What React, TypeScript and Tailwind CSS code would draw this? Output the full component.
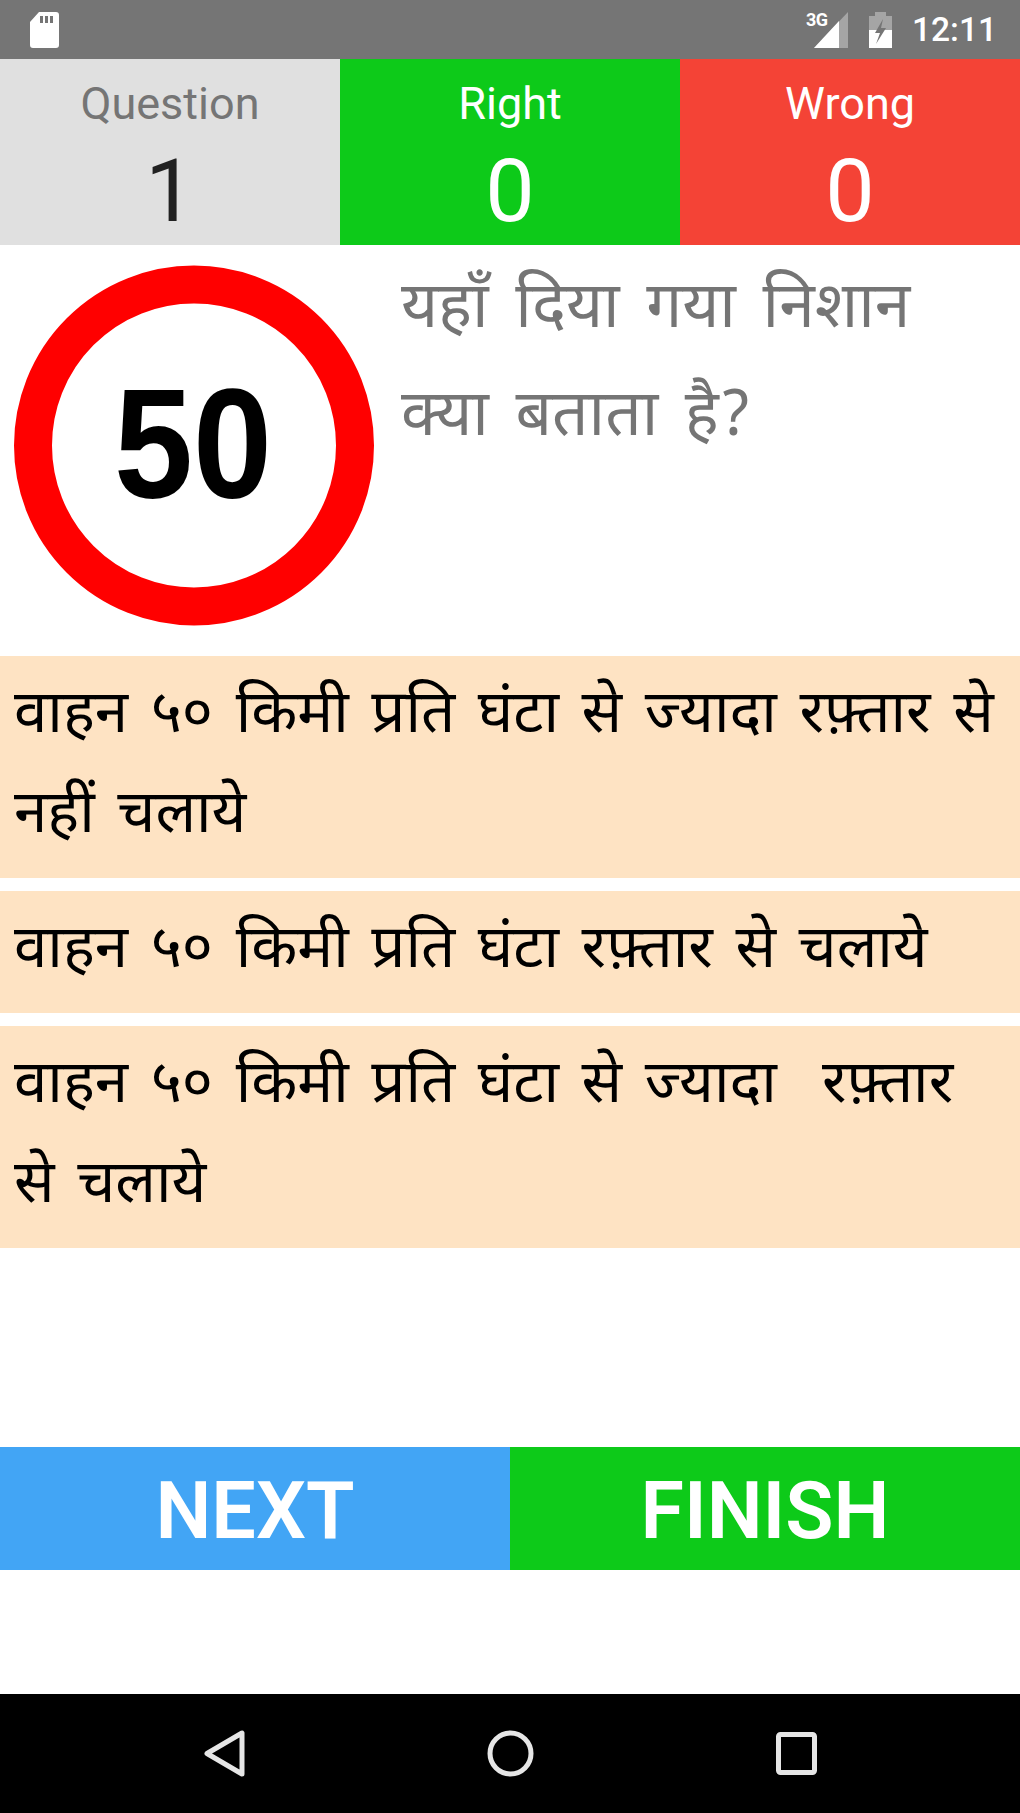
const deva = "font-['Noto_Sans_Devanagari','Lohit_Devanagari','Noto_Sans','DejaVu_Sans',sans-serif]";

function StatCell({ label, value, className, labelClass }: { label: string; value: string; className: string; labelClass: string }) {
  return (
    <div className={`flex flex-1 flex-col items-center ${className}`}>
      <div className={`mt-[20px] text-[45px] leading-[50px] ${labelClass}`}>{label}</div>
      <div className="mt-[12px] text-[88px] leading-[100px]">{value}</div>
    </div>
  );
}

function Option({ text }: { text: string }) {
  return (
    <div className={`whitespace-pre-wrap bg-[#fee3c3] py-[11px] pl-[14px] pr-[14px] text-[60px] leading-[100px] text-black [word-spacing:7px] ${deva}`}>
      {text}
    </div>
  );
}

export default function App() {
  return (
    <div className="flex h-[1813px] w-[1020px] flex-col overflow-hidden bg-white font-['Roboto',sans-serif]">
      {/* status bar */}
      <div className="flex h-[59px] items-center justify-between bg-[#757575] pl-[30px] pr-[23px]">
        <svg width="29" height="36" viewBox="0 0 29 36" className="mb-[-1px]">
          <path d="M9 0H26a3 3 0 0 1 3 3V33a3 3 0 0 1-3 3H3a3 3 0 0 1-3-3V10Z M10 4V11H13V4Z M15 4V11H18V4Z M20 4V11H23V4Z" fill="#fff" fillRule="evenodd" />
        </svg>
        <div className="flex items-center">
          <div className="relative h-[36px] w-[42px]">
            <span className="absolute left-0 top-[-1px] text-[18px] font-bold leading-[18px] tracking-[-0.5px] text-white">3G</span>
            <svg width="34" height="36" viewBox="0 0 34 36" className="absolute left-[8px] top-0">
              <path d="M34 0V36H0Z" fill="#fff" fillOpacity="0.35" />
              <path d="M25 9V36H0Z" fill="#fff" />
            </svg>
          </div>
          <svg width="24" height="36" viewBox="0 0 24 36" className="ml-[21px]">
            <path d="M6 0H17V4H23V36H0V4H6Z" fill="#fff" fillOpacity="0.35" />
            <path d="M0 18H23V36H0Z" fill="#fff" />
            <path d="M14 7L6 21H11L7 32L17 16H12Z" fill="#757575" />
          </svg>
          <span className="ml-[19px] text-[33.500px] font-medium leading-none text-white">12:11</span>
        </div>
      </div>

      {/* score row */}
      <div className="flex h-[186px] w-full">
        <StatCell label="Question" value="1" className="bg-[#e0e0e0] text-[#212121]" labelClass="text-[#757575]" />
        <StatCell label="Right" value="0" className="bg-[#0dca19] text-white" labelClass="" />
        <StatCell label="Wrong" value="0" className="bg-[#f44336] text-white" labelClass="" />
      </div>

      {/* question */}
      <div className="flex h-[411px] pl-[14px] pt-[20px]">
        <svg width="361" height="361" viewBox="0 0 361 361" className="shrink-0">
          <circle cx="180" cy="180.500" r="161" fill="#fff" stroke="#ff0000" strokeWidth="38" />
          <text x="179" y="232" textAnchor="middle" fontFamily="Liberation Sans" fontWeight="700" fontSize="156" textLength="158" lengthAdjust="spacingAndGlyphs" fill="#000">50</text>
        </svg>
        <div className={`-mt-[7px] ml-[26px] text-[64px] leading-[108px] text-[#757575] [word-spacing:10px] ${deva}`}>
          यहाँ दिया गया निशान
          <br />
          क्या बताता है?
        </div>
      </div>

      {/* answers */}
      <div className="flex flex-col gap-[13px]">
        <Option text="वाहन ५० किमी प्रति घंटा से ज्यादा रफ़्तार से नहीं चलाये" />
        <Option text="वाहन ५० किमी प्रति घंटा रफ़्तार से चलाये" />
        <Option text="वाहन ५० किमी प्रति घंटा से ज्यादा  रफ़्तार से चलाये" />
      </div>

      <div className="flex-1" />

      {/* buttons */}
      <div className="flex h-[123px] text-[79px] font-semibold text-white">
        <div className="flex flex-1 items-center justify-center bg-[#42a5f5] pt-[5px]">NEXT</div>
        <div className="flex flex-1 items-center justify-center bg-[#0dca19] pt-[5px]">FINISH</div>
      </div>
      <div className="h-[124px]" />

      {/* nav bar */}
      <div className="flex h-[119px] items-center justify-between bg-black pl-[204px] pr-[203px]">
        <svg width="41" height="47" viewBox="0 0 41 47">
          <path d="M38 3V44L3 23.500Z" fill="none" stroke="#e6e6e6" strokeWidth="5" strokeLinejoin="round" />
        </svg>
        <svg width="47" height="47" viewBox="0 0 47 47">
          <circle cx="23.500" cy="23.500" r="20.500" fill="none" stroke="#e6e6e6" strokeWidth="5" />
        </svg>
        <svg width="41" height="43" viewBox="0 0 41 43">
          <rect x="2.500" y="2.500" width="36" height="38" rx="2" fill="none" stroke="#e6e6e6" strokeWidth="5" />
        </svg>
      </div>
    </div>
  );
}
